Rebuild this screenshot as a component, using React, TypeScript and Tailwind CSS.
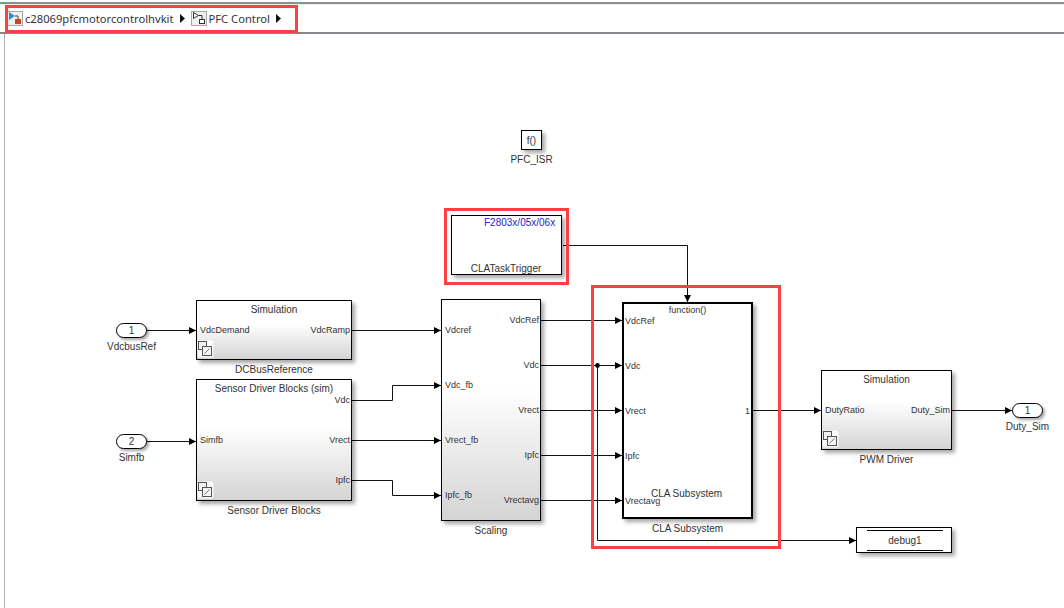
import React from "react";

const font = "font-['Liberation_Sans',Arial,sans-serif]";

function Arrow({ x, y, dir = "right" }: { x: number; y: number; dir?: "right" | "down" }) {
  // x,y is the tip of the arrow head
  if (dir === "down") return <polygon points={`${x - 3.5},${y - 7} ${x + 3.5},${y - 7} ${x},${y}`} fill="#000" />;
  return <polygon points={`${x - 7},${y - 3.5} ${x - 7},${y + 3.5} ${x},${y}`} fill="#000" />;
}

function Wires() {
  const lines = [
    "M147 330.5H196",
    "M147 441.5H196",
    "M352 330.5H441",
    "M352 400.5H392.5V385.5H441",
    "M352 440.5H441",
    "M352 480.5H392.5V495.5H441",
    "M541 320.5H622",
    "M541 365.5H622",
    "M541 410.5H622",
    "M541 455.5H622",
    "M541 500.5H622",
    "M597.5 365.5V540.5H856",
    "M563 245.5H687.5V302",
    "M752 410.5H821",
    "M952 410.5H1012",
  ];
  const tips: [number, number][] = [
    [196, 330.5], [196, 441.5], [441, 330.5], [441, 385.5], [441, 440.5], [441, 495.5],
    [622, 320.5], [622, 365.5], [622, 410.5], [622, 455.5], [622, 500.5],
    [821, 410.5], [1012, 410.5], [856, 540.5],
  ];
  return (
    <svg className="absolute inset-0" width={1064} height={608}>
      {lines.map((d) => (
        <path key={d} d={d} fill="none" stroke="#111" strokeWidth={1} />
      ))}
      {tips.map(([x, y]) => (
        <Arrow key={`${x}-${y}`} x={x} y={y} />
      ))}
      <Arrow x={687.5} y={302} dir="down" />
      <circle cx={597.5} cy={365.5} r={2.4} fill="#000" />
    </svg>
  );
}

function VariantIcon() {
  return (
    <svg className="absolute left-[0px] bottom-[1px]" width={17} height={18} viewBox="0 0 17 18">
      <rect x="0.5" y="0.5" width="16" height="17" rx="2" fill="#fff" fillOpacity="0.8" />
      <rect x="1.5" y="1.5" width="8" height="8" fill="#f0f0f0" stroke="#555" />
      <rect x="5.5" y="6.5" width="9" height="9" fill="#f4f4f4" stroke="#555" />
      <path d="M7.5 13.5L12.5 8.5" stroke="#777" />
    </svg>
  );
}

function Label({ x, y, w, children }: { x: number; y: number; w: number; children: React.ReactNode }) {
  return (
    <div className="absolute text-center text-[10px] leading-[12px] text-[#333] whitespace-nowrap" style={{ left: x, top: y, width: w }}>
      {children}
    </div>
  );
}

type PortText = { text: string; y: number; side: "l" | "r" };

function Block({
  x, y, w, h, title, caption, ports = [], variant, plain, thick,
}: {
  x: number; y: number; w: number; h: number; title?: string; caption?: string;
  ports?: PortText[]; variant?: boolean; plain?: boolean; thick?: boolean;
}) {
  return (
    <>
      <div
        className={`absolute shadow-[3px_3px_4px_rgba(0,0,0,0.35)] border-black ${thick ? "border-2" : "border"} ${
          plain ? "bg-white" : "bg-gradient-to-b from-white from-40% to-[#d4d4d4]"
        }`}
        style={{ left: x, top: y, width: w, height: h }}
      >
        {title && (
          <div className="absolute left-0 right-0 top-[3px] text-center text-[10px] leading-[12px] text-[#333] whitespace-nowrap">{title}</div>
        )}
        {ports.map((p) => (
          <div
            key={p.text}
            className={`absolute text-[9px] leading-[12px] text-[#333] whitespace-nowrap ${
              p.side === "r" ? "right-[1px]" : thick ? "left-[1px]" : "left-[3px]"
            }`}
            style={{ top: p.y - y - 8 }}
          >
            {p.text}
          </div>
        ))}
        {variant && <VariantIcon />}
      </div>
      {caption && <Label x={x - 20} y={y + h + 4} w={w + 40}>{caption}</Label>}
    </>
  );
}

function Port({ x, y, n, caption }: { x: number; y: number; n: string; caption: string }) {
  return (
    <>
      <div
        className="absolute w-[31px] h-[15px] rounded-full border border-black bg-white text-center text-[10px] leading-[13px] text-[#333] shadow-[2px_2px_3px_rgba(0,0,0,0.35)]"
        style={{ left: x, top: y }}
      >
        {n}
      </div>
      <Label x={x - 20} y={y + 18} w={71}>{caption}</Label>
    </>
  );
}

function Crumb({ children, label }: { children: React.ReactNode; label: string }) {
  return (
    <div className="flex items-center">
      <div className="w-[16px] h-[15px] border border-[#a8a8a8] bg-[#f0f0f0] flex items-center justify-center">{children}</div>
      <span className="ml-[2px] font-['Noto_Sans',sans-serif] text-[11.2px] leading-none text-[#333]">{label}</span>
      <svg className="ml-[6px]" width="5" height="9" viewBox="0 0 5 9"><polygon points="0,0 5,4.5 0,9" fill="#111" /></svg>
    </div>
  );
}

export default function App() {
  return (
    <div className={`relative w-[1064px] h-[608px] overflow-hidden bg-white ${font}`}>
      {/* window chrome */}
      <div className="h-[4px] bg-white border-b-2 border-[#8f8f8f]" />
      <div className="h-[30px] flex items-center gap-[6px] pl-[7px] border-t border-[#eeeeee] border-b-2 border-b-[#86868e] bg-white">
        <Crumb label="c28069pfcmotorcontrolhvkit">
          <svg width="14" height="13" viewBox="0 0 14 13">
            <polygon points="1,0 7,4 1,8" fill="#2a8fd0" />
            <path d="M7 4H10V7" fill="none" stroke="#444" />
            <rect x="7" y="7" width="6" height="5" fill="#c8481c" />
          </svg>
        </Crumb>
        <Crumb label="PFC Control">
          <svg width="14" height="13" viewBox="0 0 14 13">
            <polygon points="1.5,0.5 6.5,3.5 1.5,6.5" fill="#fff" stroke="#333" />
            <path d="M6.5 3.5H10V7" fill="none" stroke="#333" />
            <rect x="7.5" y="7.5" width="5" height="4" fill="#fff" stroke="#333" />
          </svg>
        </Crumb>
      </div>
      <div className="absolute left-[4px] top-[34px] bottom-0 w-px bg-[#b0b0b0]" />

      {/* diagram */}
      <Wires />
      <Block x={521} y={130} w={21} h={20} plain />
      <Label x={521} y={135} w={21}>f()</Label>
      <Label x={501} y={154} w={61}>PFC_ISR</Label>

      <Block x={451} y={215} w={111} h={60} plain />
      <div className="absolute left-[484px] top-[217px] text-[10px] leading-[12px] text-[#2222cc]">F2803x/05x/06x</div>
      <Label x={451} y={263} w={110}>CLATaskTrigger</Label>

      <Block
        x={196} y={300} w={156} h={60} title="Simulation" caption="DCBusReference" variant
        ports={[{ text: "VdcDemand", y: 331, side: "l" }, { text: "VdcRamp", y: 331, side: "r" }]}
      />
      <Block
        x={196} y={379} w={156} h={122} title="Sensor Driver Blocks (sim)" caption="Sensor Driver Blocks" variant
        ports={[
          { text: "Simfb", y: 441, side: "l" },
          { text: "Vdc", y: 401, side: "r" },
          { text: "Vrect", y: 441, side: "r" },
          { text: "Ipfc", y: 481, side: "r" },
        ]}
      />
      <Block
        x={441} y={299} w={100} h={222} caption="Scaling"
        ports={[
          { text: "Vdcref", y: 331, side: "l" },
          { text: "Vdc_fb", y: 386, side: "l" },
          { text: "Vrect_fb", y: 441, side: "l" },
          { text: "Ipfc_fb", y: 496, side: "l" },
          { text: "VdcRef", y: 321, side: "r" },
          { text: "Vdc", y: 366, side: "r" },
          { text: "Vrect", y: 411, side: "r" },
          { text: "Ipfc", y: 456, side: "r" },
          { text: "Vrectavg", y: 501, side: "r" },
        ]}
      />
      <Block
        x={622} y={302} w={131} h={217} caption="CLA Subsystem" plain thick
        ports={[
          { text: "VdcRef", y: 321, side: "l" },
          { text: "Vdc", y: 366, side: "l" },
          { text: "Vrect", y: 411, side: "l" },
          { text: "Ipfc", y: 456, side: "l" },
          { text: "Vrectavg", y: 501, side: "l" },
          { text: "1", y: 411, side: "r" },
        ]}
      />
      <div className="absolute left-[622px] top-[304px] w-[131px] text-center text-[9px] leading-[12px] text-[#333]">function()</div>
      <Label x={622} y={488} w={129}>CLA Subsystem</Label>

      <Block
        x={821} y={370} w={131} h={80} title="Simulation" caption="PWM Driver" variant
        ports={[{ text: "DutyRatio", y: 411, side: "l" }, { text: "Duty_Sim", y: 411, side: "r" }]}
      />
      <div className="absolute left-[856px] top-[527px] w-[96px] h-[26px] border border-black bg-white shadow-[3px_3px_4px_rgba(0,0,0,0.35)] flex flex-col justify-between pt-[2px] pb-[1px] pl-[10px] pr-[8px]">
        <div className="h-px bg-black" />
        <div className="text-center text-[10px] leading-[12px] text-[#333]">debug1</div>
        <div className="h-px bg-black" />
      </div>

      <Port x={116} y={323} n="1" caption="VdcbusRef" />
      <Port x={116} y={434} n="2" caption="Simfb" />
      <Port x={1012} y={403} n="1" caption="Duty_Sim" />

      {/* red highlight boxes */}
      <div className="absolute left-[5px] top-[5px] w-[293px] h-[28px] border-[3px] border-[#ff4040]" />
      <div className="absolute left-[444px] top-[208px] w-[125px] h-[77px] border-[3px] border-[#ff4040]" />
      <div className="absolute left-[591px] top-[285px] w-[190px] h-[264px] border-[3px] border-[#ff4040]" />
    </div>
  );
}
